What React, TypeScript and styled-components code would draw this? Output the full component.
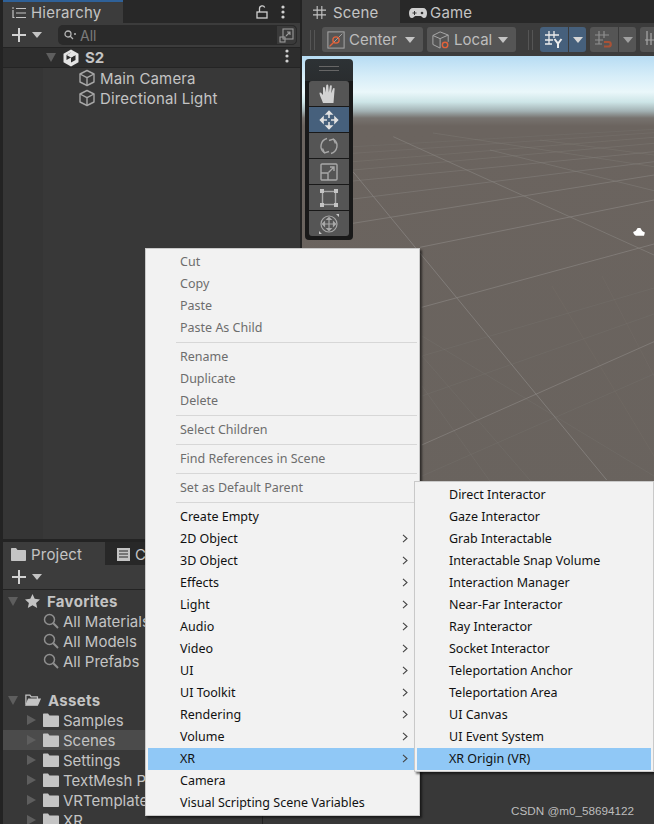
import React from 'react';
import styled, { createGlobalStyle } from 'styled-components';

const GlobalStyle = createGlobalStyle`
  html, body {
    margin: 0;
    padding: 0;
    background: #232323;
  }
  * {
    box-sizing: border-box;
  }
`;

const Page = styled.div`
  position: relative;
  width: 654px;
  height: 824px;
  overflow: hidden;
  display: flex;
  flex-direction: column;
  background: #232323;
  font-family: Inter, 'Liberation Sans', sans-serif;
  font-size: 15px;
  color: #c4c4c4;
`;

const TopArea = styled.div`
  display: flex;
  height: 539px;
  flex: none;
`;

const LeftPanel = styled.section`
  width: 297px;
  margin-left: 3px;
  display: flex;
  flex-direction: column;
  background: #383838;
  flex: none;
`;

const TabBar = styled.div`
  height: 23px;
  display: flex;
  align-items: stretch;
  background: #282828;
  flex: none;
`;

const Tab = styled.div<{ $active?: boolean; $accent?: boolean; $width: number; $pad?: number; $gap?: number }>`
  width: ${(p) => p.$width}px;
  display: flex;
  align-items: center;
  gap: ${(p) => p.$gap ?? 5}px;
  padding-left: ${(p) => p.$pad ?? 8}px;
  background: ${(p) => (p.$active ? '#3c3c3c' : 'transparent')};
  border-top: 2px solid ${(p) => (p.$accent ? '#2f6198' : p.$active ? '#3c3c3c' : 'transparent')};
  white-space: nowrap;
  overflow: hidden;
  letter-spacing: 0.2px;
  flex: none;

  svg {
    flex: none;
  }
`;

const TabActions = styled.div`
  margin-left: auto;
  display: flex;
  align-items: center;
  gap: 13px;
  padding-right: 15px;
`;

const HierarchyTools = styled.div`
  height: 25px;
  display: flex;
  align-items: center;
  background: #3c3c3c;
  border-bottom: 1px solid #232323;
  padding-left: 8px;
  flex: none;
`;

const SearchBox = styled.div`
  margin-left: 16px;
  width: 239px;
  height: 20px;
  display: flex;
  align-items: center;
  gap: 4px;
  padding-left: 6px;
  border-radius: 5px;
  background: #2a2a2a;
  color: #7b7b7b;
  font-size: 14px;
`;

const SearchExpand = styled.div`
  margin-left: auto;
  width: 21px;
  height: 20px;
  display: flex;
  align-items: center;
  justify-content: center;
  background: #3a3a3a;
  border: 1px solid #2a2a2a;
  border-radius: 0 5px 5px 0;
`;

const SceneHeader = styled.div`
  height: 20px;
  display: flex;
  align-items: center;
  padding: 0 11px 0 43px;
  background: #2d2d2d;
  border-bottom: 1px solid #242424;
  font-weight: 700;
  flex: none;
`;

const HierarchyBody = styled.div`
  flex: 1;
  display: flex;
`;

const Gutter = styled.div`
  width: 40px;
  background: #353535;
  flex: none;
`;

const HierarchyList = styled.div`
  flex: 1;
  padding-left: 35px;
  letter-spacing: 0.15px;
`;

const TreeRow = styled.div<{ $selected?: boolean; $indent?: number; $bold?: boolean }>`
  height: 20px;
  display: flex;
  align-items: center;
  gap: 4px;
  padding-left: ${(p) => p.$indent ?? 0}px;
  background: ${(p) => (p.$selected ? '#4b4b4b' : 'transparent')};
  font-weight: ${(p) => (p.$bold ? 700 : 400)};
  white-space: nowrap;
`;

const ScenePanel = styled.section`
  position: relative;
  margin-left: 2px;
  flex: 1;
  display: flex;
  flex-direction: column;
  min-width: 0;
`;

const SceneToolbar = styled.div`
  height: 33px;
  display: flex;
  align-items: center;
  padding-left: 8px;
  background: #3c3c3c;
  flex: none;
`;

const GripLines = styled.div`
  width: 5px;
  height: 20px;
  margin-right: 7px;
  border-left: 1px solid #555;
  border-right: 1px solid #555;
  flex: none;
`;

const ToolButton = styled.div<{ $width: number; $active?: boolean; $gap?: number }>`
  width: ${(p) => p.$width}px;
  height: 25px;
  margin-right: ${(p) => p.$gap ?? 0}px;
  display: flex;
  align-items: center;
  justify-content: space-between;
  padding: 0 8px 0 5px;
  border-radius: 3px;
  background: ${(p) => (p.$active ? '#46607c' : '#555555')};
  color: #bdbdbd;
  font-size: 15px;
  flex: none;
`;

const SplitLeft = styled(ToolButton)`
  border-radius: 3px 0 0 3px;
  margin-right: 1px;
  padding: 0 0 0 5px;
`;

const SplitRight = styled(ToolButton)`
  border-radius: 0 3px 3px 0;
  justify-content: center;
  padding: 0;
`;

const Caret = styled.span<{ $color?: string }>`
  width: 0;
  height: 0;
  border-left: 5px solid transparent;
  border-right: 5px solid transparent;
  border-top: 6px solid ${(p) => p.$color ?? '#c4c4c4'};
  flex: none;
`;

const ToolCaret = styled(Caret)`
  margin-left: 5px;
`;

const ButtonLabel = styled.div`
  display: flex;
  align-items: center;
  gap: 4px;
`;

const Viewport = styled.div`
  position: relative;
  flex: 1;
  overflow: hidden;
  background: linear-gradient(
    to bottom,
    #b7dcf3 0,
    #d6edf8 20px,
    #eaf7fa 36px,
    #cde5e7 46px,
    #a3b2b4 55px,
    #77736f 62px,
    #6b645f 70px,
    #69635e 100%
  );
`;

const GroundLines = styled.svg`
  position: absolute;
  inset: 0;
`;

const Blob = styled.svg`
  position: absolute;
  left: 330px;
  top: 171px;
`;

const GizmoBar = styled.div`
  position: absolute;
  left: 3px;
  top: 3px;
  width: 48px;
  height: 181px;
  padding: 22px 4px 0;
  display: flex;
  flex-direction: column;
  gap: 1px;
  border-radius: 4px;
  background: linear-gradient(to bottom, #2d3235 0, #2a2d2f 22px, #191919 22px);
`;

const GizmoHandle = styled.div`
  position: absolute;
  left: 14px;
  top: 7px;
  width: 20px;
  height: 5px;
  border-top: 1px solid #666;
  border-bottom: 1px solid #666;
`;

const GizmoButton = styled.div<{ $active?: boolean; $first?: boolean; $last?: boolean }>`
  height: 25px;
  display: flex;
  align-items: center;
  justify-content: center;
  background: ${(p) => (p.$active ? '#46607c' : '#555555')};
  border-radius: ${(p) => (p.$first ? '3px 3px 0 0' : p.$last ? '0 0 3px 3px' : '0')};
`;

const ProjectPanel = styled.section`
  flex: 1;
  margin-left: 3px;
  display: flex;
  flex-direction: column;
  min-height: 0;
  background: #383838;
  border-top: 3px solid #232323;
`;

const ProjectTools = styled.div`
  height: 25px;
  display: flex;
  align-items: center;
  padding-left: 8px;
  background: #3c3c3c;
  border-bottom: 1px solid #232323;
  flex: none;
`;

const ProjectBody = styled.div`
  flex: 1;
  display: flex;
  min-height: 0;
  overflow: hidden;
`;

const FolderTree = styled.div`
  width: 260px;
  padding-top: 1px;
  border-right: 1px solid #232323;
  flex: none;
`;

const Spacer = styled.div`
  height: 19px;
`;

const Arrow = styled.span<{ $down?: boolean }>`
  width: 0;
  height: 0;
  flex: none;
  ${(p) =>
    p.$down
      ? `border-left: 5px solid transparent;
         border-right: 5px solid transparent;
         border-top: 9px solid #5e5e5e;`
      : `border-top: 5px solid transparent;
         border-bottom: 5px solid transparent;
         border-left: 9px solid #5e5e5e;
         margin-right: 3px;`}
`;

const SectionRow = styled(TreeRow)`
  padding-left: 5px;
  gap: 7px;
  letter-spacing: 0.3px;
`;

const SceneArrow = styled(Arrow)`
  margin-right: 6px;
`;

const SceneName = styled.span`
  margin-left: 5px;
`;

const HeaderDots = styled.span`
  margin-left: auto;
`;

const Menu = styled.div<{ $left: number; $top: number; $width: number }>`
  position: absolute;
  left: ${(p) => p.$left}px;
  top: ${(p) => p.$top}px;
  width: ${(p) => p.$width}px;
  padding: 2px 2px 1px;
  background: #f2f2f2;
  border: 1px solid #c9c9c9;
  box-shadow: 2px 2px 2px rgba(0, 0, 0, 0.55);
  font-family: 'Noto Sans', 'Liberation Sans', sans-serif;
  font-size: 12.5px;
`;

const MenuRow = styled.div<{ $disabled?: boolean; $highlight?: boolean }>`
  height: 22px;
  display: flex;
  align-items: center;
  justify-content: space-between;
  padding: 0 9px 2px 32px;
  color: ${(p) => (p.$disabled ? '#6d6d6d' : '#111111')};
  background: ${(p) => (p.$highlight ? '#90c8f6' : 'transparent')};
  white-space: nowrap;
`;

const MenuDivider = styled.div`
  height: 1px;
  margin: 3px 0 3px 28px;
  background: #d7d7d7;
`;

const Watermark = styled.div`
  position: absolute;
  right: 20px;
  bottom: 7px;
  color: #bdbdbd;
  font-family: 'Liberation Sans', sans-serif;
  font-size: 11.7px;
`;

const CubeIcon = () => (
  <svg width="18" height="18" viewBox="0 0 18 18" fill="none" stroke="#a6a6a6" strokeWidth="1.4">
    <path d="M9 1.5 16 5v8l-7 3.5L2 13V5z" strokeLinejoin="round" />
    <path d="M2 5l7 3.6L16 5M9 8.6v7.9" />
  </svg>
);

const UnityIcon = () => (
  <svg width="18" height="18" viewBox="0 0 18 18">
    <path d="M9 .5 16.5 4.7v8.6L9 17.5 1.500 13.300V4.700z" fill="#e4e4e4" />
    <path d="M9 3.500v5L4.500 11V6zM9 8.500 13.500 6v5L9 13.500z" fill="#2d2d2d" />
    <path d="M9 3.500 13.500 6 9 8.500 4.500 6z" fill="#e4e4e4" />
  </svg>
);

const PlusIcon = () => (
  <svg width="16" height="16" viewBox="0 0 16 16" stroke="#d2d2d2" strokeWidth="2">
    <path d="M8 1v14M1 8h14" />
  </svg>
);

const FolderIcon = () => (
  <svg width="16" height="14" viewBox="0 0 16 14" fill="#c4c4c4">
    <path d="M0 1.500C0 .9.400.500 1 .500h4l1.500 2H15c.6 0 1 .4 1 1V13c0 .6-.4 1-1 1H1c-.6 0-1-.4-1-1z" />
  </svg>
);

const OpenFolderIcon = () => (
  <svg width="16" height="14" viewBox="0 0 18 14" fill="none" stroke="#c4c4c4" strokeWidth="1.400">
    <path d="M1 12V1.500h4.500l1.500 2h7v2.500" />
    <path d="M1 12.800 4 6h13l-3 6.800z" fill="#c4c4c4" />
  </svg>
);

const SearchIcon = () => (
  <svg width="16" height="16" viewBox="0 0 16 16" fill="none" stroke="#8f8f8f" strokeWidth="1.500">
    <circle cx="6.500" cy="6.500" r="5" />
    <path d="M10.300 10.300 15 15" strokeWidth="2" />
  </svg>
);

const StarIcon = () => (
  <svg width="15" height="14" viewBox="0 0 15 14" fill="#c4c4c4">
    <path d="M7.500 0l2.200 4.800 5.300.6-3.900 3.500 1.100 5.100-4.700-2.700-4.700 2.700 1.100-5.100L0 5.400l5.300-.6z" />
  </svg>
);

const DotsIcon = () => (
  <svg width="4" height="14" viewBox="0 0 4 14" fill="#d0d0d0">
    <circle cx="2" cy="2" r="1.600" />
    <circle cx="2" cy="7" r="1.600" />
    <circle cx="2" cy="12" r="1.600" />
  </svg>
);

const Chevron = () => (
  <svg width="6" height="9" viewBox="0 0 6 9" fill="none" stroke="#444" strokeWidth="1.100">
    <path d="M1 .8 5 4.500 1 8.200" />
  </svg>
);

const gizmoIcons: React.ReactNode[] = [
  <svg key="hand" width="20" height="20" viewBox="0 0 20 20" fill="#d2d2d2">
    <path d="M4 19C2.500 15 .8 11.500.5 9.500c-.2-1.200 1-1.500 1.700-.6L4 11V4c0-1.300 1.700-1.300 1.900 0l.6 4.500L7.200 1.500c.2-1.300 2-1.300 2.100 0l.5 7 1.100-6.500c.2-1.300 2-1 1.900.2l-.6 7 1.700-4.500c.4-1.200 2-.7 1.700.5L14.500 19z" />
  </svg>,
  <svg key="move" width="20" height="20" viewBox="0 0 20 20" fill="none" stroke="#e2e2e2" strokeWidth="1.600">
    <path d="M10 3v5M10 12v5M3 10h5M12 10h5" />
    <path d="M7.500 4 10 1.500 12.500 4zM7.500 16l2.500 2.500 2.500-2.500zM4 7.500 1.500 10 4 12.500zM16 7.500l2.500 2.500-2.500 2.500z" fill="#e2e2e2" />
  </svg>,
  <svg key="rotate" width="20" height="20" viewBox="0 0 20 20" fill="none" stroke="#a8a8a8" strokeWidth="1.400">
    <path d="M8 2.500A8 8 0 0 0 5 16.500" />
    <path d="M3.500 12.500 5.500 17 10 15.500" />
    <path d="M12 17.500A8 8 0 0 0 15 3.500" />
    <path d="M16.500 7.500 14.500 3 10 4.500" />
  </svg>,
  <svg key="scale" width="20" height="20" viewBox="0 0 20 20" fill="none" stroke="#a8a8a8" strokeWidth="1.400">
    <rect x="2" y="2" width="16" height="16" rx="1" />
    <path d="M2 11h7v7" />
    <path d="M9.500 10.500 15 5M11 5h4v4" />
  </svg>,
  <svg key="rect" width="20" height="20" viewBox="0 0 20 20" fill="none" stroke="#a8a8a8" strokeWidth="1.400">
    <rect x="3.500" y="3.500" width="13" height="13" />
    <path d="M1 1h4v4H1zM15 1h4v4h-4zM1 15h4v4H1zM15 15h4v4h-4z" fill="#c4c4c4" stroke="none" />
  </svg>,
  <svg key="transform" width="22" height="22" viewBox="0 0 22 22" fill="none" stroke="#a8a8a8" strokeWidth="1.200">
    <circle cx="11" cy="11" r="8" />
    <path d="M11 5v12M5 11h12" />
    <path d="M9 6.500 11 4.500l2 2zM9 15.500l2 2 2-2zM6.500 9l-2 2 2 2zM15.500 9l2 2-2 2z" fill="#c4c4c4" />
    <path d="M18 1h3v3zM1 21v-3l3 3z" fill="#c4c4c4" stroke="none" />
  </svg>,
];

// x1 y1 x2 y2 opacity of the floor grid, in viewport pixels
const gridLines = [
  [119.7, 389, 352, 285.7, 0.8],
  [119.7, 251.3, 352, 188, 0.8],
  [118, 191.3, 352, 144, 0.8],
  [51, 167.3, 352, 119, 0.7],
  [51, 143, 352, 105.7, 0.55],
  [51, 125, 352, 95.7, 0.45],
  [51, 114, 352, 87.3, 0.35],
  [51, 105.7, 352, 81.3, 0.3],
  [51, 97.3, 352, 76.7, 0.25],
  [51, 90.7, 352, 73.3, 0.2],
  [51, 115.7, 304.7, 424, 0.9],
  [91.3, 80.7, 352, 199, 0.7],
  [188, 94, 352, 134.7, 0.5],
  [131, 77, 352, 110.7, 0.35],
  [238, 84, 352, 99, 0.3],
  [120, 280, 352, 420, 0.2],
  [120, 330, 230, 484, 0.2],
  [120, 300, 280, 484, 0.2],
  [120, 420, 352, 318, 0.2],
  [120, 300, 352, 232, 0.2],
  [120, 340, 352, 258, 0.2],
  [250, 230, 352, 400, 0.15],
  [300, 220, 352, 320, 0.15],
];

const editItems = [
  ['Cut', 'Copy', 'Paste', 'Paste As Child'],
  ['Rename', 'Duplicate', 'Delete'],
  ['Select Children'],
  ['Find References in Scene'],
  ['Set as Default Parent'],
];

const createItems = [
  { label: 'Create Empty' },
  { label: '2D Object', sub: true },
  { label: '3D Object', sub: true },
  { label: 'Effects', sub: true },
  { label: 'Light', sub: true },
  { label: 'Audio', sub: true },
  { label: 'Video', sub: true },
  { label: 'UI', sub: true },
  { label: 'UI Toolkit', sub: true },
  { label: 'Rendering', sub: true },
  { label: 'Volume', sub: true },
  { label: 'XR', sub: true, highlight: true },
  { label: 'Camera' },
  { label: 'Visual Scripting Scene Variables' },
];

const xrItems = [
  'Direct Interactor',
  'Gaze Interactor',
  'Grab Interactable',
  'Interactable Snap Volume',
  'Interaction Manager',
  'Near-Far Interactor',
  'Ray Interactor',
  'Socket Interactor',
  'Teleportation Anchor',
  'Teleportation Area',
  'UI Canvas',
  'UI Event System',
  'XR Origin (VR)',
];

const favorites = ['All Materials', 'All Models', 'All Prefabs'];
const assets = ['Samples', 'Scenes', 'Settings', 'TextMesh Pro', 'VRTemplateAssets', 'XR'];

const App = () => {
  return (
    <Page>
      <GlobalStyle />
      <TopArea>
        <LeftPanel>
          <TabBar>
            <Tab $active $accent $width={120}>
              <svg width="15" height="12" viewBox="0 0 15 12" fill="none" stroke="#c4c4c4" strokeWidth="1.200">
                <path d="M5 1.500h10M5 6h10M5 10.500h10M1 1h2M2 3v7.500h1.500" />
              </svg>
              Hierarchy
            </Tab>
            <TabActions>
              <svg width="12" height="14" viewBox="0 0 12 14" fill="none" stroke="#d0d0d0" strokeWidth="1.300">
                <rect x="1" y="7" width="10" height="6" />
                <path d="M3.500 7V3.500a2.700 2.700 0 0 1 5.200-1" />
              </svg>
              <DotsIcon />
            </TabActions>
          </TabBar>
          <HierarchyTools>
            <PlusIcon />
            <ToolCaret />
            <SearchBox>
              <svg width="12" height="11" viewBox="0 0 12 11" fill="none" stroke="#b5b5b5" strokeWidth="1.300">
                <circle cx="4" cy="4" r="3" />
                <path d="M6 6l3 3M10 4h2" />
              </svg>
              All
              <SearchExpand>
                <svg width="15" height="15" viewBox="0 0 15 15" fill="none" stroke="#9a9a9a" strokeWidth="1.100">
                  <rect x="4" y="1" width="10" height="10" />
                  <rect x="1" y="9" width="5" height="5" />
                  <path d="M7 8l4-4M8 4h3v3" />
                </svg>
              </SearchExpand>
            </SearchBox>
          </HierarchyTools>
          <SceneHeader>
            <SceneArrow $down />
            <UnityIcon />
            <SceneName>S2</SceneName>
            <HeaderDots>
              <DotsIcon />
            </HeaderDots>
          </SceneHeader>
          <HierarchyBody>
            <Gutter />
            <HierarchyList>
              <TreeRow>
                <CubeIcon />
                Main Camera
              </TreeRow>
              <TreeRow>
                <CubeIcon />
                Directional Light
              </TreeRow>
            </HierarchyList>
          </HierarchyBody>
        </LeftPanel>

        <ScenePanel>
          <TabBar>
            <Tab $active $width={98} $pad={11} $gap={7}>
              <svg width="13" height="13" viewBox="0 0 14 14" stroke="#c4c4c4" strokeWidth="1.200">
                <path d="M4.500 0v14M9.500 0v14M0 4.500h14M0 9.500h14" />
              </svg>
              Scene
            </Tab>
            <Tab $width={110} $pad={9} $gap={3}>
              <svg width="18" height="12" viewBox="0 0 18 12">
                <path d="M4 1h10c2.500 0 4 2 4 5s-1 5-3 5c-1.500 0-2.500-2-3.500-2h-5C5.500 9 4.500 11 3 11 1 11 0 9 0 6s1.500-5 4-5z" fill="#d0d0d0" />
                <path d="M3.500 6h4M5.500 4v4" stroke="#333" strokeWidth="1" />
                <circle cx="13" cy="6" r="1.300" fill="#333" />
              </svg>
              Game
            </Tab>
          </TabBar>
          <SceneToolbar>
            <GripLines />
            <ToolButton $width={101} $gap={4}>
              <ButtonLabel>
                <svg width="18" height="18" viewBox="0 0 20 20" fill="none">
                  <rect x="1" y="1" width="18" height="18" stroke="#a8a8a8" strokeWidth="1.100" />
                  <path d="M3 17 17 3" stroke="#a8a8a8" strokeWidth="1" />
                  <circle cx="10" cy="10" r="3.500" stroke="#e2623a" strokeWidth="1.500" />
                  <path d="M3 17l4-4" stroke="#e2623a" strokeWidth="1.500" />
                </svg>
                Center
              </ButtonLabel>
              <Caret />
            </ToolButton>
            <ToolButton $width={89} $gap={12}>
              <ButtonLabel>
                <svg width="18" height="18" viewBox="0 0 20 20" fill="none">
                  <path d="M9 1 18 4.500V12M9 1 1 5v10l8 4" stroke="#a8a8a8" strokeWidth="1.100" />
                  <path d="M1 5l8 3.500L18 4.500M9 8.500V19" stroke="#a8a8a8" strokeWidth="1.100" />
                  <circle cx="14.500" cy="15.500" r="3" stroke="#e2623a" strokeWidth="1.600" />
                </svg>
                Local
              </ButtonLabel>
              <Caret />
            </ToolButton>
            <GripLines />
            <SplitLeft $width={28} $active>
              <svg width="18" height="17" viewBox="0 0 18 17" fill="none" stroke="#ececec" strokeWidth="1.300">
                <path d="M4 0v13M9 0v7M0 4h14M0 9h8M0 13h7" />
                <path d="M9.500 8 13 12.500 16.500 8M13 12.500V17" strokeWidth="2" />
              </svg>
            </SplitLeft>
            <SplitRight $width={17} $gap={4} $active>
              <Caret $color="#d6d6d6" />
            </SplitRight>
            <SplitLeft $width={28}>
              <svg width="18" height="17" viewBox="0 0 18 17" fill="none">
                <path d="M4 0v13M9 0v7M0 4h14M0 9h8M0 13h7" stroke="#8f8f8f" strokeWidth="1.200" />
                <path d="M9 11h4.500a2.200 2.200 0 0 1 0 4.500H9" stroke="#a95236" strokeWidth="2.200" />
              </svg>
            </SplitLeft>
            <SplitRight $width={17} $gap={4}>
              <Caret $color="#a0a0a0" />
            </SplitRight>
            <SplitLeft $width={30}>
              <svg width="18" height="17" viewBox="0 0 18 17" fill="none" stroke="#a8a8a8" strokeWidth="1.200">
                <path d="M2 0v14M6 2v12M10 0v14M14 2v12M0 9h18" />
              </svg>
            </SplitLeft>
          </SceneToolbar>
          <Viewport>
            <GroundLines width="352" height="485" viewBox="0 0 352 485" fill="none" stroke="#84807c" strokeWidth="1">
              {gridLines.map(([x1, y1, x2, y2, opacity], i) => (
                <line key={i} x1={x1} y1={y1} x2={x2} y2={y2} opacity={opacity} />
              ))}
            </GroundLines>
            <Blob width="14" height="10" viewBox="0 0 13 11" fill="#ffffff">
              <path d="M0 5.500 3 4 5 1h3l2 3.500 3 1.500-1 3.500H3L1 8z" />
            </Blob>
            <GizmoBar>
              <GizmoHandle />
              {gizmoIcons.map((icon, i) => (
                <GizmoButton key={i} $active={i === 1} $first={i === 0} $last={i === gizmoIcons.length - 1}>
                  {icon}
                </GizmoButton>
              ))}
            </GizmoBar>
          </Viewport>
        </ScenePanel>
      </TopArea>

      <ProjectPanel>
        <TabBar>
          <Tab $active $width={102} $pad={8}>
            <svg width="15" height="13" viewBox="0 0 15 13" fill="#c4c4c4">
              <path d="M0 1c0-.6.400-1 1-1h4l1.500 2H14c.6 0 1 .4 1 1v9c0 .6-.4 1-1 1H1c-.6 0-1-.4-1-1z" />
            </svg>
            Project
          </Tab>
          <Tab $width={40} $pad={12}>
            <svg width="13" height="13" viewBox="0 0 13 13" fill="#c4c4c4">
              <path d="M0 0h13v13H0z" />
              <path d="M2 3h9M2 6h9M2 9h9" stroke="#282828" strokeWidth="1.200" />
            </svg>
            Console
          </Tab>
        </TabBar>
        <ProjectTools>
          <PlusIcon />
          <ToolCaret />
        </ProjectTools>
        <ProjectBody>
          <FolderTree>
            <SectionRow $bold>
              <Arrow $down />
              <StarIcon />
              Favorites
            </SectionRow>
            {favorites.map((name) => (
              <TreeRow key={name} $indent={40}>
                <SearchIcon />
                {name}
              </TreeRow>
            ))}
            <Spacer />
            <SectionRow $bold>
              <Arrow $down />
              <OpenFolderIcon />
              Assets
            </SectionRow>
            {assets.map((name) => (
              <TreeRow key={name} $indent={24} $selected={name === 'Scenes'}>
                <Arrow />
                <FolderIcon />
                {name}
              </TreeRow>
            ))}
          </FolderTree>
        </ProjectBody>
      </ProjectPanel>

      <Menu $left={145} $top={248} $width={275}>
        {editItems.map((group, g) => (
          <React.Fragment key={g}>
            {group.map((label) => (
              <MenuRow key={label} $disabled>
                {label}
              </MenuRow>
            ))}
            <MenuDivider />
          </React.Fragment>
        ))}
        {createItems.map((item) => (
          <MenuRow key={item.label} $highlight={item.highlight}>
            {item.label}
            {item.sub && <Chevron />}
          </MenuRow>
        ))}
      </Menu>

      <Menu $left={414} $top={481} $width={240}>
        {xrItems.map((label) => (
          <MenuRow key={label} $highlight={label === 'XR Origin (VR)'}>
            {label}
          </MenuRow>
        ))}
      </Menu>

      <Watermark>CSDN @m0_58694122</Watermark>
    </Page>
  );
};

export default App;
